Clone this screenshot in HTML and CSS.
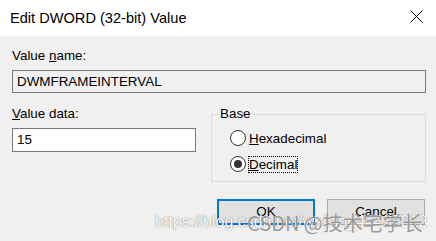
FILE: index.html
```html
<!DOCTYPE html>
<html lang="en">
<head>
    <meta charset="UTF-8">
    <title>Edit DWORD (32-bit) Value</title>
    <link rel="stylesheet" href="styles.css">
</head>
<body>
    <div id="dialog">
        <div class="titlebar">
            <span class="title">Edit DWORD (32-bit) Value</span>
            <svg class="close" width="13" height="13" viewBox="0 0 13 13">
                <path d="M0.5 0.5 L12.5 12.5 M12.5 0.5 L0.5 12.5" stroke="#000" stroke-width="1" fill="none"/>
            </svg>
        </div>

        <div class="content">
            <div class="field-label">Value <u>n</u>ame:</div>
            <div class="textbox readonly">DWMFRAMEINTERVAL</div>

            <div class="row">
                <div class="data-col">
                    <div class="field-label"><u>V</u>alue data:</div>
                    <div class="textbox">15</div>
                </div>

                <fieldset class="base">
                    <legend>Base</legend>
                    <div class="radio">
                        <span class="dot"></span>
                        <span class="radio-text"><u>H</u>exadecimal</span>
                    </div>
                    <div class="radio">
                        <span class="dot checked"></span>
                        <span class="radio-text focus"><u>D</u>ecimal</span>
                    </div>
                </fieldset>
            </div>

            <div class="buttons">
                <div class="btn default">OK</div>
                <div class="btn">Cancel</div>
            </div>
        </div>

        <!-- blog watermark baked into the screenshot -->
        <div class="watermark">
            <span class="url">https://blog.csdn.net/weixin_44435212</span>
            <span class="author">CSDN @技术宅学长</span>
        </div>
    </div>
</body>
</html>
```

FILE: styles.css
```css
* {
    margin: 0;
    padding: 0;
    box-sizing: border-box;
}

body {
    font-family: 'Liberation Sans', Arial, sans-serif;
    font-size: 13.4px;
    line-height: 16px;
    color: #000;
    background: #f0f0f0;
    overflow: hidden;
}

#dialog {
    position: relative;
    width: 436px;
    height: 241px;
    background: #f0f0f0;
}

.titlebar {
    height: 36px;
    background: #fff;
    display: flex;
    justify-content: space-between;
    align-items: flex-start;
    padding: 8px 13px 0 10px;
}

.title {
    font-size: 14.6px;
    line-height: 20px;
}

.close {
    display: block;
    margin-top: 2px;
}

.content {
    padding: 12px 10px 0 12px;
}

.textbox {
    height: 23px;
    border: 1px solid #7a7a7a;
    background: #fff;
    padding-left: 4px;
    line-height: 21px;
    margin-top: 6px;
}

.textbox.readonly {
    background: #f0f0f0;
}

.row {
    display: flex;
    gap: 15px;
    margin-top: 13px;
}

.data-col {
    width: 184px;
}

.data-col .textbox {
    height: 24px;
    line-height: 22px;
}

.base {
    flex: 1;
    height: 76px;
    border: 1px solid #dcdcdc;
    padding: 0 0 0 18px;
}

.base legend {
    margin-left: -12px;
    padding: 0 2px;
    line-height: 16px;
}

.radio {
    display: flex;
    align-items: center;
    height: 18px;
    margin-top: 7px;
}

.radio + .radio {
    margin-top: 8px;
}

.dot {
    position: relative;
    width: 16px;
    height: 16px;
    border: 1px solid #333;
    border-radius: 50%;
    background: #fff;
    margin-right: 2px;
}

.dot.checked::after {
    content: "";
    position: absolute;
    left: 3px;
    top: 3px;
    width: 8px;
    height: 8px;
    border-radius: 50%;
    background: #333;
}

.radio-text {
    border: 1px dotted transparent;
    line-height: 15px;
}

.radio-text.focus {
    border-color: #000;
}

.buttons {
    display: flex;
    justify-content: flex-end;
    gap: 12px;
    margin-top: 17px;
    margin-right: 1px;
}

.btn {
    width: 98px;
    height: 26px;
    border: 1px solid #adadad;
    background: #e1e1e1;
    text-align: center;
    line-height: 24px;
}

.btn.default {
    border: 2px solid #0078d7;
    line-height: 22px;
}

.watermark {
    position: absolute;
    left: 0;
    top: 0;
    width: 100%;
    height: 100%;
    pointer-events: none;
}

.url {
    position: absolute;
    left: 155px;
    top: 212px;
    font-size: 16px;
    line-height: 20px;
    white-space: nowrap;
    color: #fff;
    text-shadow: 0 0 1px rgba(0, 0, 0, 0.5), 0 0 2px rgba(0, 0, 0, 0.2);
}

.author {
    position: absolute;
    left: 247px;
    top: 210px;
    font-family: 'Noto Sans CJK SC', 'Liberation Sans', sans-serif;
    font-size: 20px;
    line-height: 26px;
    white-space: nowrap;
    color: rgba(110, 110, 110, 0.7);
    text-shadow: 0 0 1px rgba(255, 255, 255, 0.9);
}
```
